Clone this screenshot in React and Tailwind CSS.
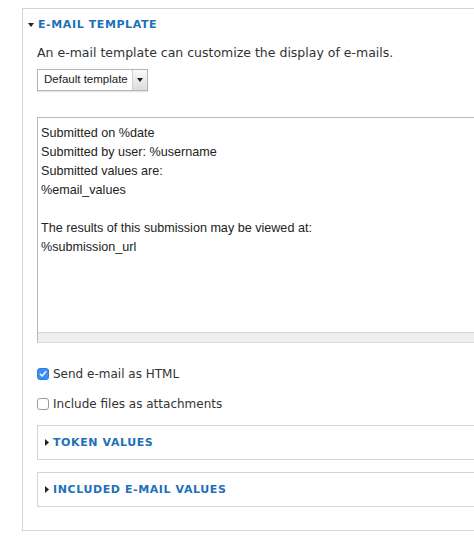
import React from "react";

function Tri({ dir = "down" }) {
  if (dir === "down")
    return (
      <svg width="6" height="4" viewBox="0 0 6 4" className="shrink-0">
        <path d="M0 0H6L3 4Z" fill="#222" />
      </svg>
    );
  return (
    <svg width="4" height="7" viewBox="0 0 4 7" className="shrink-0">
      <path d="M0 0L4 3.5L0 7Z" fill="#222" />
    </svg>
  );
}

function Checkbox({ checked }) {
  if (checked)
    return (
      <span className="w-[12px] h-[12px] rounded-[3px] bg-[#3a8ef6] border border-[#2f7de0] flex items-center justify-center shrink-0">
        <svg width="8" height="8" viewBox="0 0 8 8">
          <path d="M1.3 4.2L3.2 6L6.8 1.6" fill="none" stroke="#fff" strokeWidth="1.5" strokeLinecap="round" strokeLinejoin="round" />
        </svg>
      </span>
    );
  return <span className="w-[12px] h-[12px] rounded-[3px] bg-white border border-[#9a9a9a] shrink-0" />;
}

function SubDetails({ label }) {
  return (
    <div className="h-[35px] border border-r-0 border-[#d4d4d4] flex items-center pl-[7px] gap-[4px]">
      <Tri dir="right" />
      <span className="text-[11px] font-bold uppercase tracking-[0.6px] text-[#1d70b8] leading-none">{label}</span>
    </div>
  );
}

export default function App() {
  const lines = [
    "Submitted on %date",
    "Submitted by user: %username",
    "Submitted values are:",
    "%email_values",
    "\u00a0",
    "The results of this submission may be viewed at:",
    "%submission_url",
  ];
  return (
    <div className="w-[474px] h-[540px] overflow-hidden bg-white font-['DejaVu_Sans',sans-serif] text-[#333]">
      <div className="pt-[8px] pl-[22px]">
        <div className="w-[480px] border border-r-0 border-[#d4d4d4] pb-[23px]">
          <div className="mt-[8px] ml-[5px] h-[15px] flex items-center gap-[4px]">
            <Tri dir="down" />
            <span className="text-[11px] font-bold uppercase tracking-[0.6px] text-[#1d70b8] leading-none">E-mail template</span>
          </div>
          <div className="pl-[14px]">
            <p className="mt-[12px] text-[12.5px] leading-[18px] text-[#333]">
              An e-mail template can customize the display of e-mails.
            </p>
            <div className="mt-[7px] w-[111px] h-[22px] border border-[#b5b5b5] flex bg-white shadow-[0_1px_1px_rgba(0,0,0,0.1)]">
              <span className="flex-1 flex items-center pl-[6px] text-[11.5px] text-[#222] font-['Liberation_Sans',sans-serif]">Default template</span>
              <span className="w-[15px] bg-gradient-to-b from-[#fafafa] to-[#dcdcdc] border-l border-[#d0d0d0] flex items-center justify-center">
                <svg width="6" height="4" viewBox="0 0 6 4"><path d="M0 0H6L3 4Z" fill="#222" /></svg>
              </span>
            </div>
            <div className="mt-[26px] w-[440px] border border-r-0 border-[#b8b8b8] border-b-[#dcdcdc]">
              <div className="h-[214px] pt-[6px] pl-[3px] font-['Liberation_Sans',sans-serif] text-[12.6px] leading-[19px] text-[#222]">
                {lines.map((l, i) => (
                  <div key={i}>{l}</div>
                ))}
              </div>
              <div className="h-[10px] bg-[#eeeeee] border-t border-[#d8d8d8]" />
            </div>
            <div className="mt-[24px] flex items-center gap-[4px] h-[14px]">
              <Checkbox checked />
              <span className="text-[12px] text-[#333] leading-none">Send e-mail as HTML</span>
            </div>
            <div className="mt-[16px] flex items-center gap-[4px] h-[14px]">
              <Checkbox />
              <span className="text-[12px] text-[#333] leading-none">Include files as attachments</span>
            </div>
            <div className="mt-[14px]">
              <SubDetails label="Token values" />
            </div>
            <div className="mt-[12px]">
              <SubDetails label="Included e-mail values" />
            </div>
          </div>
        </div>
      </div>
    </div>
  );
}
